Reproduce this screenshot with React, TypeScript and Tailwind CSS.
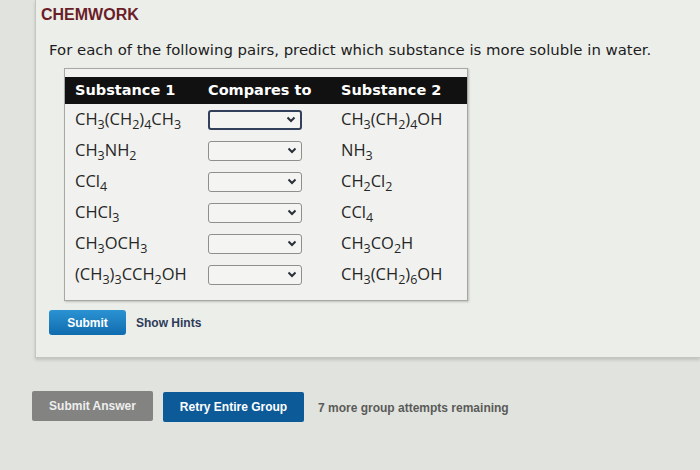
import React from "react";

type Part = string | [string];

const rows: { left: Part[]; right: Part[] }[] = [
  { left: ["CH", ["3"], "(CH", ["2"], ")", ["4"], "CH", ["3"]], right: ["CH", ["3"], "(CH", ["2"], ")", ["4"], "OH"] },
  { left: ["CH", ["3"], "NH", ["2"]], right: ["NH", ["3"]] },
  { left: ["CCl", ["4"]], right: ["CH", ["2"], "Cl", ["2"]] },
  { left: ["CHCl", ["3"]], right: ["CCl", ["4"]] },
  { left: ["CH", ["3"], "OCH", ["3"]], right: ["CH", ["3"], "CO", ["2"], "H"] },
  { left: ["(CH", ["3"], ")", ["3"], "CCH", ["2"], "OH"], right: ["CH", ["3"], "(CH", ["2"], ")", ["6"], "OH"] },
];

function Formula({ parts }: { parts: Part[] }) {
  return (
    <span className="font-['Open_Sans',sans-serif] text-[16.5px] text-[#262626]">
      {parts.map((p, i) =>
        typeof p === "string" ? (
          <span key={i}>{p}</span>
        ) : (
          <sub key={i} className="-bottom-[0.3em] text-[12.5px]">
            {p[0]}
          </sub>
        )
      )}
    </span>
  );
}

function Dropdown({ focused }: { focused?: boolean }) {
  return (
    <div
      className={
        "flex h-[20px] w-[94px] items-center justify-end rounded-[3px] bg-[#f4f5f2] pr-[4px] " +
        (focused ? "border-2 border-[#33405c]" : "border border-[#8e908c]")
      }
    >
      <svg width="10" height="7" viewBox="0 0 10 7">
        <polyline points="1.5,1.5 5,5 8.5,1.5" fill="none" stroke="#2a2f3a" strokeWidth="2" />
      </svg>
    </div>
  );
}

export default function App() {
  return (
    <div className="h-[470px] w-[700px] overflow-hidden bg-[#e1e3df] font-['Liberation_Sans',Arial,sans-serif]">
      <div className="ml-[35px] h-[358px] border-b border-l border-[#c4c6c2] bg-[#eceeea] pl-[5px] pt-[6px] shadow-[0_2px_3px_rgba(0,0,0,0.15)]">
        <h1 className="text-[16px] font-bold leading-[18px] text-[#6b1d28]">CHEMWORK</h1>
        <p className="mt-[17px] pl-[8px] font-['DejaVu_Sans',sans-serif] text-[14.9px] leading-[18px] text-[#1c1c1c]">
          For each of the following pairs, predict which substance is more soluble in water.
        </p>
        <div className="ml-[23px] mt-[9px] w-[404px] border border-[#a6a8a4] bg-[#f1f2ef] pb-[10px] pt-[8px] shadow-[1px_1px_2px_rgba(0,0,0,0.2)]">
          <div className="flex h-[27px] items-center bg-[#111111] pl-[10px] font-['DejaVu_Sans',sans-serif] text-[14.5px] font-bold text-white">
            <span className="w-[133px]">Substance 1</span>
            <span className="w-[133px]">Compares to</span>
            <span>Substance 2</span>
          </div>
          {rows.map((r, i) => (
            <div key={i} className="flex h-[31px] items-center pl-[10px]">
              <div className="w-[133px]">
                <Formula parts={r.left} />
              </div>
              <div className="w-[133px]">
                <Dropdown focused={i === 0} />
              </div>
              <Formula parts={r.right} />
            </div>
          ))}
        </div>
        <div className="ml-[8px] mt-[9px] flex items-center gap-[10px]">
          <button className="h-[25px] w-[77px] rounded-[3px] bg-gradient-to-b from-[#2b93d3] to-[#0f6cae] text-[12px] font-bold text-white">
            Submit
          </button>
          <span className="text-[12px] font-bold text-[#2c3b58]">Show Hints</span>
        </div>
      </div>
      <div className="ml-[32px] mt-[32px] flex items-center">
        <button className="h-[30px] w-[121px] rounded-[2px] bg-[#838482] text-[12px] font-bold text-[#eeeeee]">
          Submit Answer
        </button>
        <button className="ml-[10px] mt-[2px] h-[30px] w-[141px] rounded-[2px] bg-[#0c5a98] text-[12px] font-bold text-white">
          Retry Entire Group
        </button>
        <span className="ml-[14px] mt-[4px] text-[12px] font-bold text-[#5a5b58]">7 more group attempts remaining</span>
      </div>
    </div>
  );
}
